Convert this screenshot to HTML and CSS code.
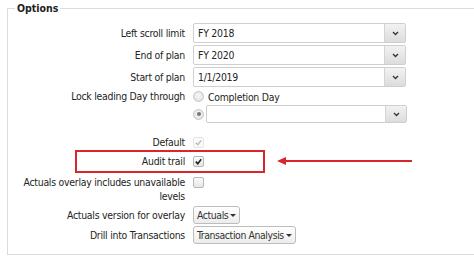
FILE: index.html
```html
<!DOCTYPE html>
<html>
<head>
<meta charset="utf-8">
<link rel="stylesheet" href="styles.css">
</head>
<body>
<fieldset class="options">
  <legend class="legend">Options</legend>

  <div class="row">
    <span class="label">Left scroll limit</span>
    <div class="select wide"><span class="value">FY 2018</span><span class="drop"><svg viewBox="0 0 8 6" width="7" height="5"><path d="M1 1.2 L4 4.2 L7 1.2" fill="none" stroke="#333" stroke-width="1.6"/></svg></span></div>
  </div>
  <div class="row">
    <span class="label">End of plan</span>
    <div class="select wide"><span class="value">FY 2020</span><span class="drop"><svg viewBox="0 0 8 6" width="7" height="5"><path d="M1 1.2 L4 4.2 L7 1.2" fill="none" stroke="#333" stroke-width="1.6"/></svg></span></div>
  </div>
  <div class="row">
    <span class="label">Start of plan</span>
    <div class="select wide"><span class="value">1/1/2019</span><span class="drop"><svg viewBox="0 0 8 6" width="7" height="5"><path d="M1 1.2 L4 4.2 L7 1.2" fill="none" stroke="#333" stroke-width="1.6"/></svg></span></div>
  </div>

  <div class="row lock">
    <span class="label">Lock leading Day through</span>
    <div class="stack">
      <div class="line1"><span class="radio"></span><span class="rtext">Completion Day</span></div>
      <div class="line2"><span class="radio on"></span><div class="select narrow"><span class="value"></span><span class="drop"><svg viewBox="0 0 8 6" width="7" height="5"><path d="M1 1.2 L4 4.2 L7 1.2" fill="none" stroke="#333" stroke-width="1.6"/></svg></span></div></div>
    </div>
  </div>

  <div class="row small default">
    <span class="label">Default</span>
    <span class="check disabled"><svg viewBox="0 0 10 10" width="9" height="9"><path d="M2 5.2 L4.2 7.4 L8 2.6" fill="none" stroke="#bbb" stroke-width="1.6"/></svg></span>
  </div>
  <div class="row small audit">
    <span class="label">Audit trail</span>
    <span class="check"><svg viewBox="0 0 10 10" width="9" height="9"><path d="M2 5.2 L4.2 7.4 L8 2.6" fill="none" stroke="#222" stroke-width="1.8"/></svg></span>
  </div>
  <div class="row two">
    <span class="label">Actuals overlay includes unavailable levels</span>
    <span class="check"></span>
  </div>
  <div class="row btnrow first">
    <span class="label">Actuals version for overlay</span>
    <div class="ctl"><span class="button">Actuals<span class="caret"></span></span></div>
  </div>
  <div class="row btnrow">
    <span class="label">Drill into Transactions</span>
    <div class="ctl"><span class="button">Transaction Analysis<span class="caret"></span></span></div>
  </div>
</fieldset>

<div class="highlight"></div>
<svg class="arrow" width="140" height="12" viewBox="0 0 140 12">
  <path d="M7 6 L135 6" stroke="#d8262b" stroke-width="2"/>
  <path d="M0 6 L9 2 L9 10 Z" fill="#d8262b"/>
</svg>
</body>
</html>
```

FILE: styles.css
```css
html, body {
  margin: 0;
  padding: 0;
  background: #fff;
}
body {
  width: 474px;
  height: 262px;
  overflow: hidden;
  position: relative;
  font-family: "DejaVu Sans Condensed", "DejaVu Sans", sans-serif;
  font-size: 10.4px;
  letter-spacing: -0.25px;
  color: #242424;
}
.options {
  margin: 0 0 0 7px;
  padding: 7px 0 0 10px;
  border: 1px solid #dcdcdc;
  border-right: none;
  width: 456px;
  height: 246px;
  box-sizing: content-box;
}
.legend {
  margin-left: -3px;
  padding: 0 2px;
  font-weight: bold;
  font-size: 10.5px;
  letter-spacing: 0;
  line-height: 16px;
  color: #222;
}
.row {
  display: grid;
  grid-template-columns: 167px auto;
  column-gap: 8px;
  align-items: center;
  justify-items: start;
  height: 20px;
  margin-bottom: 2px;
}
.label {
  justify-self: end;
  text-align: right;
  line-height: 14px;
  white-space: nowrap;
}
.select {
  display: flex;
  height: 20px;
  box-sizing: border-box;
  border: 1px solid #cfcfcf;
  border-radius: 2px;
  background: #fff;
}
.select.wide { width: 213px; }
.select.narrow { width: 201px; height: 18px; }
.value {
  flex: 1;
  padding-left: 4px;
  line-height: 18px;
}
.drop {
  width: 20px;
  display: flex;
  align-items: center;
  justify-content: center;
  border-left: 1px solid #d4d4d4;
  background: linear-gradient(#f2f2f2, #dcdcdc);
}
.lock {
  height: auto;
  margin-top: 2px;
  align-items: start;
}
.lock .label { line-height: 15px; }
.stack { display: flex; flex-direction: column; }
.line1 {
  display: flex;
  align-items: center;
  height: 15px;
}
.line2 {
  display: flex;
  align-items: center;
  height: 18px;
  margin-top: 1px;
  gap: 2px;
}
.radio {
  width: 11px;
  height: 11px;
  box-sizing: border-box;
  border-radius: 50%;
  border: 1px solid #c4c4c4;
  background: radial-gradient(circle at 50% 40%, #f6f6f6, #dedede);
  display: inline-block;
  position: relative;
}
.radio.on::after {
  content: "";
  position: absolute;
  left: 2.5px;
  top: 2.5px;
  width: 4px;
  height: 4px;
  border-radius: 50%;
  background: #777;
}
.rtext { margin-left: 4px; }
.check {
  width: 11px;
  height: 11px;
  box-sizing: border-box;
  border: 1px solid #b8b8b8;
  border-radius: 2px;
  background: linear-gradient(#fbfbfb, #e6e6e6);
  display: flex;
  align-items: center;
  justify-content: center;
}
.check.disabled {
  border-color: #e6e6e6;
  background: #fafafa;
}
.small { height: 14px; margin-bottom: 0; }
.default { margin-top: 12px; }
.audit { margin-top: 5px; }
.two {
  height: auto;
  margin-top: 7px;
  align-items: start;
  margin-bottom: 3px;
}
.two .label {
  white-space: normal;
  width: 167px;
}
.two .check { margin-top: 2px; }
.btnrow { height: 18px; }
.button {
  display: inline-flex;
  align-items: center;
  height: 18px;
  box-sizing: border-box;
  padding: 0 3px 0 3px;
  border: 1px solid #bdbdbd;
  border-radius: 3px;
  background: linear-gradient(#ffffff, #ececec);
  color: #333;
  letter-spacing: -0.4px;
}
.caret {
  width: 0;
  height: 0;
  margin-left: 2px;
  border-left: 3px solid transparent;
  border-right: 3px solid transparent;
  border-top: 3px solid #333;
}
.highlight {
  position: absolute;
  left: 75px;
  top: 150px;
  width: 190px;
  height: 23px;
  box-sizing: border-box;
  border: 2px solid #d8262b;
}
.arrow {
  position: absolute;
  left: 277px;
  top: 155px;
}
```
